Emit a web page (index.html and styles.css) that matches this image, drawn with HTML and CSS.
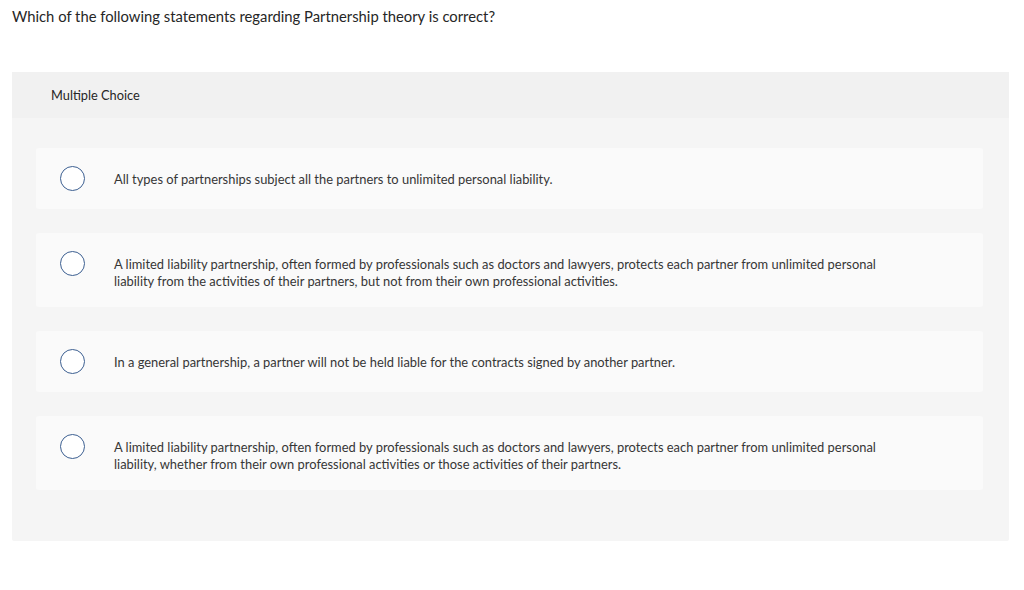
FILE: index.html
```html
<!DOCTYPE html>
<html>
<head>
<meta charset="utf-8">
<link rel="stylesheet" href="styles.css">
</head>
<body>
<div class="page">
  <p class="question">Which of the following statements regarding Partnership theory is correct?</p>
  <div class="panel">
    <div class="panel-head">Multiple Choice</div>
    <div class="panel-body">
      <div class="option">
        <span class="radio"></span>
        <div class="option-text">All types of partnerships subject all the partners to unlimited personal liability.</div>
      </div>
      <div class="option">
        <span class="radio"></span>
        <div class="option-text">A limited liability partnership, often formed by professionals such as doctors and lawyers, protects each partner from unlimited personal liability from the activities of their partners, but not from their own professional activities.</div>
      </div>
      <div class="option">
        <span class="radio"></span>
        <div class="option-text">In a general partnership, a partner will not be held liable for the contracts signed by another partner.</div>
      </div>
      <div class="option">
        <span class="radio"></span>
        <div class="option-text">A limited liability partnership, often formed by professionals such as doctors and lawyers, protects each partner from unlimited personal liability, whether from their own professional activities or those activities of their partners.</div>
      </div>
    </div>
  </div>
</div>
</body>
</html>
```
FILE: styles.css
```css
* { box-sizing: border-box; }
html, body { margin: 0; padding: 0; background: #fff; }
body { font-family: Lato, "Open Sans", sans-serif; color: #333; }
.page { padding: 6px 0 0 12px; }
.question {
  margin: 0;
  font-size: 14.8px;
  line-height: 20px;
  color: #262626;
}
.panel {
  margin-top: 46px;
  width: 997px;
  background: #f5f5f5;
  border-radius: 2px;
}
.panel-head {
  background: #f1f1f1;
  height: 46px;
  padding: 15px 0 0 39px;
  font-size: 12.8px;
  line-height: 17px;
  color: #262626;
}
.panel-body {
  padding: 30px 26px 51px 24px;
  display: flex;
  flex-direction: column;
  gap: 24px;
}
.option {
  background: #fafafa;
  border-radius: 3px;
  padding: 18px 24px;
  display: flex;
  align-items: flex-start;
}
.radio {
  flex: none;
  width: 25px;
  height: 25px;
  border: 1.3px solid #3c5f91;
  border-radius: 50%;
  background: #fff;
}
.option-text {
  margin: 5px 0 -1px 29px;
  max-width: 780px;
  font-size: 12.9px;
  line-height: 17px;
  color: #363636;
}
```
